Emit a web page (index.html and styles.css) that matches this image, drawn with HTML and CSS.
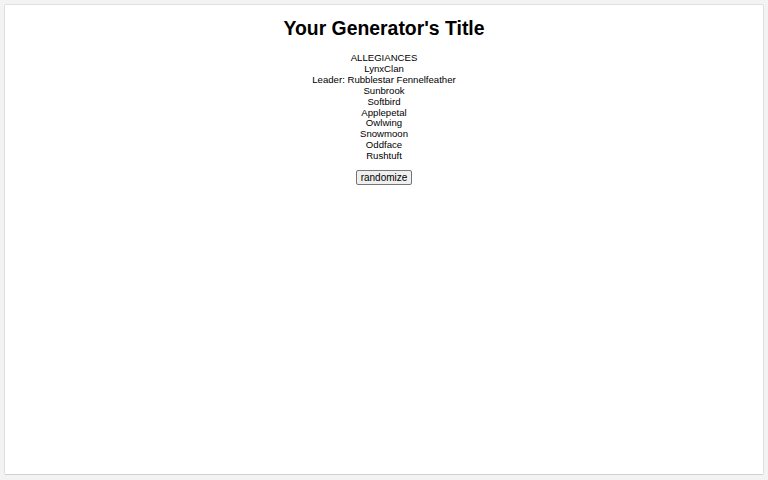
FILE: index.html
```html
<!DOCTYPE html>
<html>
<head>
<meta charset="utf-8">
<link rel="stylesheet" href="styles.css">
</head>
<body>
<div class="card">
  <h1 class="title">Your Generator's Title</h1>
  <div class="output">
    <div>ALLEGIANCES</div>
    <div>LynxClan</div>
    <div>Leader: Rubblestar Fennelfeather</div>
    <div>Sunbrook</div>
    <div>Softbird</div>
    <div>Applepetal</div>
    <div>Owlwing</div>
    <div>Snowmoon</div>
    <div>Oddface</div>
    <div>Rushtuft</div>
  </div>
  <button class="btn">randomize</button>
</div>
</body>
</html>
```
FILE: styles.css
```css
html, body {
  margin: 0;
  padding: 0;
  background: #f3f3f3;
  height: 100%;
}
body {
  padding: 4px 4px 5px 4px;
  box-sizing: border-box;
  font-family: "Liberation Sans", Arial, sans-serif;
}
.card {
  background: #fff;
  border: 1px solid #e0e0e0;
  border-bottom-color: #d0d0d0;
  border-radius: 2px;
  height: 100%;
  box-sizing: border-box;
  text-align: center;
  padding-top: 12px;
}
.title {
  margin: 0;
  font-size: 19.4px;
  font-weight: bold;
  color: #000;
  line-height: 23px;
}
.output {
  margin-top: 13px;
  font-size: 9.6px;
  line-height: 10.9px;
  color: #000;
}
.btn {
  margin-top: 8px;
  font-family: "Liberation Sans", Arial, sans-serif;
  font-size: 10px;
  padding: 1px 4px;
  background: #efefef;
  border: 1px solid #767676;
  border-radius: 2px;
  color: #000;
}
```
